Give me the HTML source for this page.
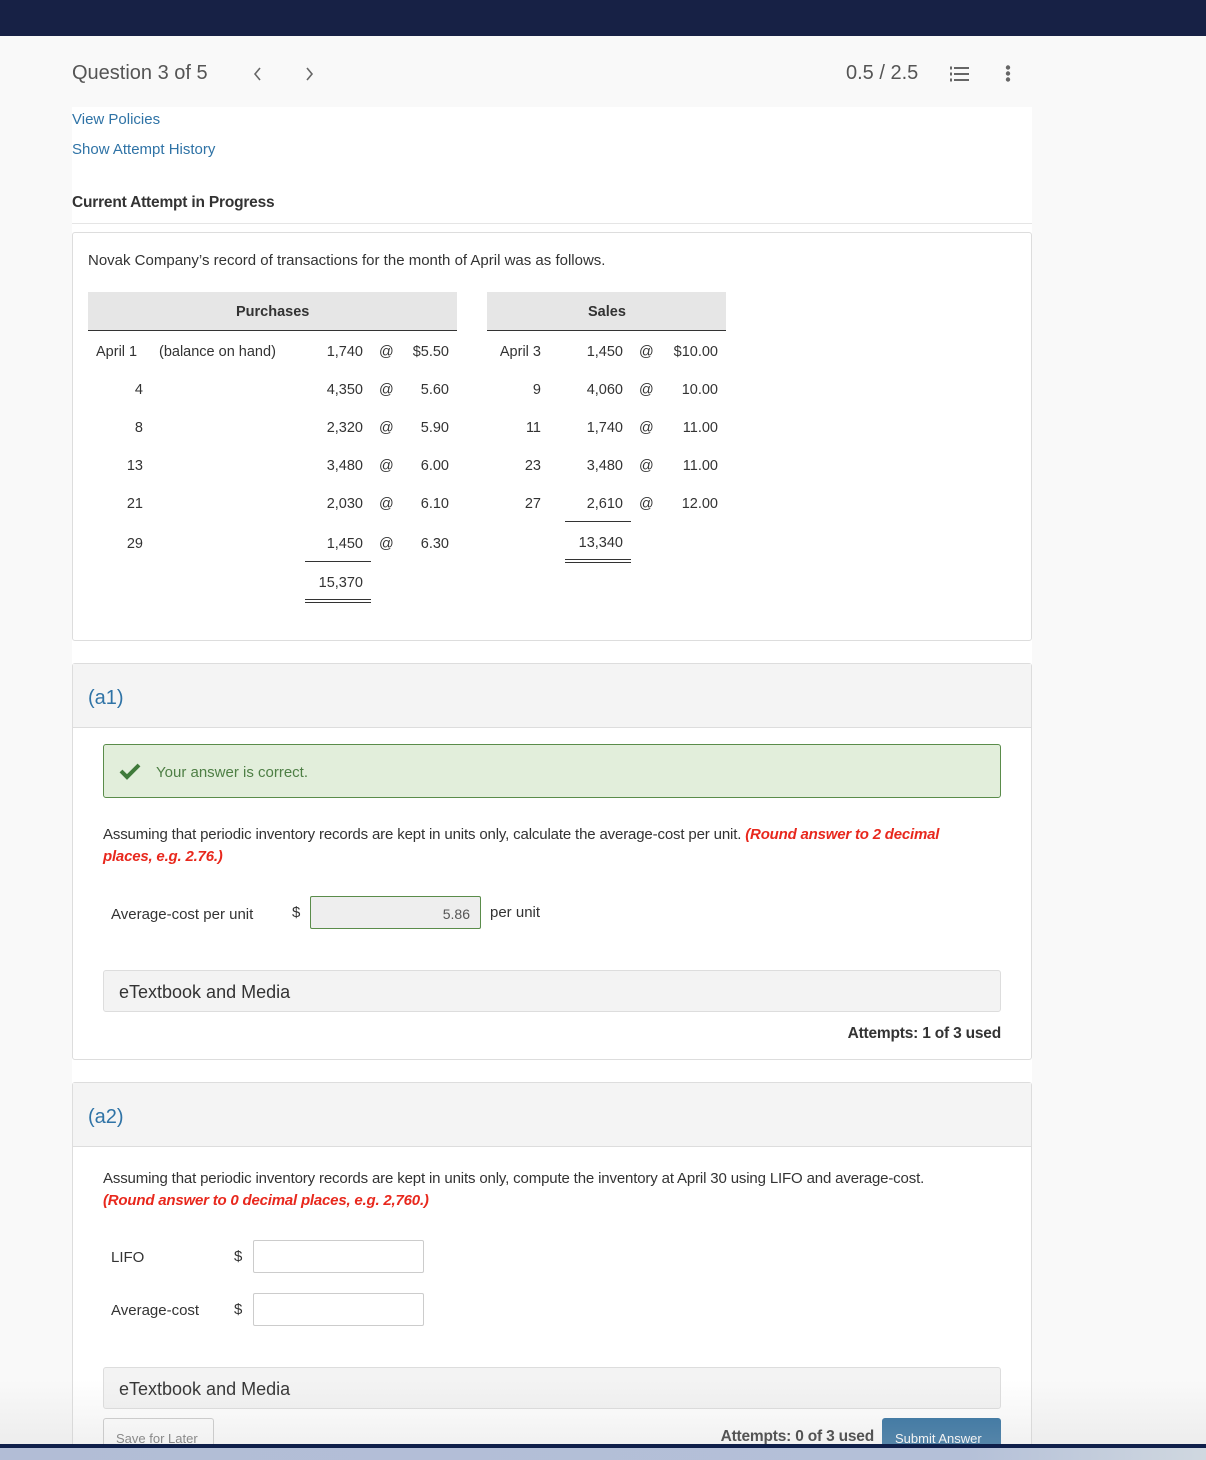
<!DOCTYPE html>
<html style="width:1206px;height:1460px;overflow:hidden"><head><meta charset="utf-8"><style>
*{margin:0;padding:0;box-sizing:border-box}
body{width:1206px;height:1460px;position:relative;overflow:hidden;background:#f9f9f9;font-family:"Liberation Sans",sans-serif;color:#333}
.a{position:absolute;white-space:nowrap;line-height:1;padding-top:2px}
.r{position:absolute;white-space:nowrap;line-height:1;text-align:right;padding-top:2px}
.box{position:absolute;background:#fff;border:1px solid #ddd;border-radius:3px}
.red{color:#e8281d;font-style:italic;font-weight:bold;letter-spacing:-0.2px}
.inp{position:absolute;border:1px solid #ccc;background:#fff;border-radius:2px}
.tb{font-size:14.5px;color:#333}
</style></head><body>
<div style="position:absolute;left:0;top:0;width:1206px;height:36px;background:#172145"></div>
<div class="a" style="left:72px;top:61px;font-size:20px;color:#555">Question 3 of 5</div>
<svg class="a" style="left:252px;top:64px" width="12" height="18"><path d="M8 2 L3 8 L8 14" fill="none" stroke="#666" stroke-width="1.6"/></svg>
<svg class="a" style="left:303px;top:64px" width="12" height="18"><path d="M4 2 L9 8 L4 14" fill="none" stroke="#666" stroke-width="1.6"/></svg>
<div class="a" style="left:846px;top:61px;font-size:20px;color:#555">0.5 / 2.5</div>
<svg class="a" style="left:949px;top:63px" width="22" height="20"><g fill="#666"><rect x="5" y="2" width="15" height="2"/><rect x="5" y="8" width="15" height="2"/><rect x="5" y="14" width="15" height="2"/><rect x="1" y="1.5" width="2" height="3"/><rect x="1" y="7.5" width="2" height="3"/><rect x="1" y="13.5" width="2" height="3"/></g></svg>
<svg class="a" style="left:1004px;top:62px" width="8" height="22"><g fill="#666"><circle cx="4" cy="3.5" r="2.2"/><circle cx="4" cy="9.5" r="2.2"/><circle cx="4" cy="15.5" r="2.2"/></g></svg>

<div style="position:absolute;left:72px;top:107px;width:960px;height:1340px;background:#fff"></div>
<div class="a" style="left:72px;top:110px;font-size:15px;color:#2f73a6">View Policies</div>
<div class="a" style="left:72px;top:140px;font-size:15px;color:#2f73a6">Show Attempt History</div>
<div class="a" style="left:72px;top:193px;font-size:15.5px;color:#333;font-weight:bold;letter-spacing:-0.2px">Current Attempt in Progress</div>
<div style="position:absolute;left:72px;top:223px;width:960px;height:1px;background:#e5e5e5"></div>

<div class="box" style="left:72px;top:232px;width:960px;height:409px"></div>
<div class="a" style="left:88px;top:251px;font-size:15px;color:#333">Novak Company’s record of transactions for the month of April was as follows.</div>
<div style="position:absolute;left:88px;top:292px;width:369px;height:39px;background:#e6e6e6;border-bottom:1px solid #333"></div>
<div style="position:absolute;left:487px;top:292px;width:239px;height:39px;background:#e6e6e6;border-bottom:1px solid #333"></div>
<div class="a tb" style="left:236px;top:303px;font-weight:bold">Purchases</div>
<div class="a tb" style="left:588px;top:303px;font-weight:bold">Sales</div>

<div class="a tb" style="left:96px;top:343px">April 1</div>
<div class="a tb" style="left:159px;top:343px">(balance on hand)</div>
<div class="r tb" style="right:1063px;top:381px">4</div>
<div class="r tb" style="right:1063px;top:419px">8</div>
<div class="r tb" style="right:1063px;top:457px">13</div>
<div class="r tb" style="right:1063px;top:495px">21</div>
<div class="r tb" style="right:1063px;top:535px">29</div>

<div class="r tb" style="right:843px;top:343px">1,740</div>
<div class="r tb" style="right:843px;top:381px">4,350</div>
<div class="r tb" style="right:843px;top:419px">2,320</div>
<div class="r tb" style="right:843px;top:457px">3,480</div>
<div class="r tb" style="right:843px;top:495px">2,030</div>
<div class="r tb" style="right:843px;top:535px">1,450</div>
<div class="r tb" style="right:843px;top:574px">15,370</div>
<div class="a tb" style="left:379px;top:343px">@</div>
<div class="a tb" style="left:379px;top:381px">@</div>
<div class="a tb" style="left:379px;top:419px">@</div>
<div class="a tb" style="left:379px;top:457px">@</div>
<div class="a tb" style="left:379px;top:495px">@</div>
<div class="a tb" style="left:379px;top:535px">@</div>
<div class="r tb" style="right:757px;top:343px">$5.50</div>
<div class="r tb" style="right:757px;top:381px">5.60</div>
<div class="r tb" style="right:757px;top:419px">5.90</div>
<div class="r tb" style="right:757px;top:457px">6.00</div>
<div class="r tb" style="right:757px;top:495px">6.10</div>
<div class="r tb" style="right:757px;top:535px">6.30</div>
<div style="position:absolute;left:305px;top:561px;width:66px;height:1px;background:#333"></div>
<div style="position:absolute;left:305px;top:599px;width:66px;height:4px;border-top:1px solid #333;border-bottom:1px solid #333"></div>

<div class="r tb" style="right:665px;top:343px">April 3</div>
<div class="r tb" style="right:665px;top:381px">9</div>
<div class="r tb" style="right:665px;top:419px">11</div>
<div class="r tb" style="right:665px;top:457px">23</div>
<div class="r tb" style="right:665px;top:495px">27</div>
<div class="r tb" style="right:583px;top:343px">1,450</div>
<div class="r tb" style="right:583px;top:381px">4,060</div>
<div class="r tb" style="right:583px;top:419px">1,740</div>
<div class="r tb" style="right:583px;top:457px">3,480</div>
<div class="r tb" style="right:583px;top:495px">2,610</div>
<div class="r tb" style="right:583px;top:534px">13,340</div>
<div class="a tb" style="left:639px;top:343px">@</div>
<div class="a tb" style="left:639px;top:381px">@</div>
<div class="a tb" style="left:639px;top:419px">@</div>
<div class="a tb" style="left:639px;top:457px">@</div>
<div class="a tb" style="left:639px;top:495px">@</div>
<div class="r tb" style="right:488px;top:343px">$10.00</div>
<div class="r tb" style="right:488px;top:381px">10.00</div>
<div class="r tb" style="right:488px;top:419px">11.00</div>
<div class="r tb" style="right:488px;top:457px">11.00</div>
<div class="r tb" style="right:488px;top:495px">12.00</div>
<div style="position:absolute;left:565px;top:521px;width:66px;height:1px;background:#333"></div>
<div style="position:absolute;left:565px;top:559px;width:66px;height:4px;border-top:1px solid #333;border-bottom:1px solid #333"></div>

<div class="box" style="left:72px;top:663px;width:960px;height:397px"></div>
<div style="position:absolute;left:73px;top:664px;width:958px;height:64px;background:#f4f4f4;border-bottom:1px solid #ddd"></div>
<div class="a" style="left:88px;top:686px;font-size:20px;color:#2f73a6">(a1)</div>
<div style="position:absolute;left:103px;top:744px;width:898px;height:54px;background:#e2eedb;border:1px solid #5a8c4a;border-radius:3px"></div>
<svg class="a" style="left:119px;top:760px" width="22" height="20"><path d="M2 9 L8 15 L20 3" fill="none" stroke="#3f7a3a" stroke-width="4"/></svg>
<div class="a" style="left:156px;top:763px;font-size:15px;color:#4e7f45">Your answer is correct.</div>
<div class="a" style="left:103px;top:822px;font-size:15px;line-height:22px;letter-spacing:-0.15px;color:#333">Assuming that periodic inventory records are kept in units only, calculate the average-cost per unit. <span class="red">(Round answer to 2 decimal</span><br><span class="red">places, e.g. 2.76.)</span></div>
<div class="a" style="left:111px;top:905px;font-size:15px">Average-cost per unit</div>
<div class="a" style="left:292px;top:903px;font-size:15px">$</div>
<div class="inp" style="left:310px;top:896px;width:171px;height:33px;background:#eee;border-color:#5a8c4a"></div>
<div class="r" style="right:736px;top:905px;font-size:14px;color:#555">5.86</div>
<div class="a" style="left:490px;top:903px;font-size:15px">per unit</div>
<div style="position:absolute;left:103px;top:970px;width:898px;height:42px;background:#f3f3f3;border:1px solid #ddd;border-radius:3px"></div>
<div class="a" style="left:119px;top:981px;font-size:18px;color:#333">eTextbook and Media</div>
<div class="r" style="right:205px;top:1024px;font-size:15.5px;font-weight:bold;letter-spacing:-0.2px;color:#333">Attempts: 1 of 3 used</div>

<div class="box" style="left:72px;top:1082px;width:960px;height:366px;border-bottom:none"></div>
<div style="position:absolute;left:73px;top:1083px;width:958px;height:64px;background:#f4f4f4;border-bottom:1px solid #ddd"></div>
<div class="a" style="left:88px;top:1105px;font-size:20px;color:#2f73a6">(a2)</div>
<div class="a" style="left:103px;top:1166px;font-size:15px;line-height:22px;letter-spacing:-0.15px;color:#333">Assuming that periodic inventory records are kept in units only, compute the inventory at April 30 using LIFO and average-cost.<br><span class="red">(Round answer to 0 decimal places, e.g. 2,760.)</span></div>
<div class="a" style="left:111px;top:1248px;font-size:15px">LIFO</div>
<div class="a" style="left:234px;top:1247px;font-size:15px">$</div>
<div class="inp" style="left:253px;top:1240px;width:171px;height:33px"></div>
<div class="a" style="left:111px;top:1301px;font-size:15px">Average-cost</div>
<div class="a" style="left:234px;top:1300px;font-size:15px">$</div>
<div class="inp" style="left:253px;top:1293px;width:171px;height:33px"></div>
<div style="position:absolute;left:103px;top:1367px;width:898px;height:42px;background:#f3f3f3;border:1px solid #ddd;border-radius:3px"></div>
<div class="a" style="left:119px;top:1378px;font-size:18px;color:#333">eTextbook and Media</div>
<div style="position:absolute;left:103px;top:1418px;width:111px;height:30px;background:#fff;border:1px solid #ccc;border-bottom:none;border-radius:3px 3px 0 0"></div>
<div class="a" style="left:116px;top:1430px;font-size:13px;color:#777">Save for Later</div>
<div class="r" style="right:332px;top:1427px;font-size:15.5px;font-weight:bold;letter-spacing:-0.2px;color:#333">Attempts: 0 of 3 used</div>
<div style="position:absolute;left:882px;top:1418px;width:119px;height:30px;background:#2e6e9e;border-radius:3px 3px 0 0"></div>
<div class="a" style="left:895px;top:1430px;font-size:13px;color:#fff">Submit Answer</div>

<div style="position:absolute;left:0;top:1380px;width:1206px;height:64px;background:linear-gradient(rgba(200,200,200,0),rgba(200,200,200,0.25))"></div>
<div style="position:absolute;left:0;top:1444px;width:1206px;height:4px;background:#0f1f4a"></div>
<div style="position:absolute;left:0;top:1448px;width:1206px;height:12px;background:linear-gradient(90deg,#b2bdd6 0%,#b4c0d8 80%,#d0d8e0 100%)"></div>
</body></html>
